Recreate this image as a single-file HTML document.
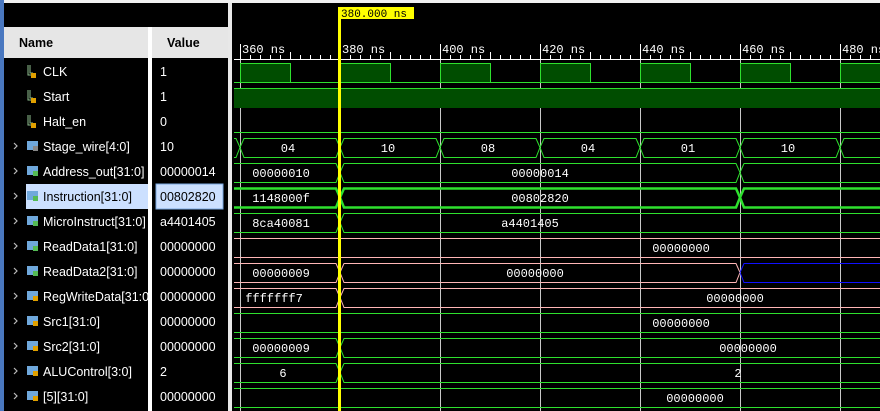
<!DOCTYPE html>
<html><head><style>
body{margin:0;width:880px;height:411px;overflow:hidden;background:#000}
svg{display:block}
.n{font-family:"Liberation Sans",Arial,sans-serif;font-size:12.5px;fill:#fff}
.h{font-family:"Liberation Sans",Arial,sans-serif;font-size:12.5px;font-weight:bold;fill:#000}
.w{font-family:"Liberation Mono",monospace;font-size:12px;fill:#fff}
.r{font-family:"Liberation Mono",monospace;font-size:12px;fill:#fff}
</style></head><body>
<svg width="880" height="411" viewBox="0 0 880 411" xmlns="http://www.w3.org/2000/svg">
<rect x="0" y="0" width="880" height="411" fill="#000"/>
<rect x="0" y="0" width="880" height="3" fill="#f0f0f0"/>
<rect x="0" y="0" width="4" height="411" fill="#4a78c0"/>
<rect x="148" y="27" width="4" height="384" fill="#fff"/>
<rect x="228" y="3" width="4" height="408" fill="#e8e8e8"/>
<rect x="4" y="27" width="144" height="31" fill="#e6e6e6"/>
<rect x="152" y="27" width="76" height="31" fill="#e6e6e6"/>
<text class="h" x="19" y="47">Name</text>
<text class="h" x="167" y="47">Value</text>
<rect x="26" y="184" width="122" height="25" fill="#cce0ff"/>
<rect x="156" y="184" width="67" height="25" fill="#cce0ff" stroke="#7aa7e0"/>
<g class="n">
<text x="43" y="76">CLK</text><text x="160" y="76">1</text>
<text x="43" y="101">Start</text><text x="160" y="101">1</text>
<text x="43" y="126">Halt_en</text><text x="160" y="126">0</text>
<text x="43" y="151">Stage_wire[4:0]</text><text x="160" y="151">10</text>
<text x="43" y="176">Address_out[31:0]</text><text x="160" y="176">00000014</text>
<text x="43" y="201" style="fill:#000">Instruction[31:0]</text><text x="160" y="201" style="fill:#000">00802820</text>
<text x="43" y="226">MicroInstruct[31:0]</text><text x="160" y="226">a4401405</text>
<text x="43" y="251">ReadData1[31:0]</text><text x="160" y="251">00000000</text>
<text x="43" y="276">ReadData2[31:0]</text><text x="160" y="276">00000000</text>
<text x="43" y="301">RegWriteData[31:0]</text><text x="160" y="301">00000000</text>
<text x="43" y="326">Src1[31:0]</text><text x="160" y="326">00000000</text>
<text x="43" y="351">Src2[31:0]</text><text x="160" y="351">00000000</text>
<text x="43" y="376">ALUControl[3:0]</text><text x="160" y="376">2</text>
<text x="43" y="401">[5][31:0]</text><text x="160" y="401">00000000</text>
</g>
<g stroke="#bbb" stroke-width="1.2" fill="none">
<path d="M14 143l3 3-3 3M14 168l3 3-3 3M14 193l3 3-3 3M14 218l3 3-3 3M14 243l3 3-3 3M14 268l3 3-3 3M14 293l3 3-3 3M14 318l3 3-3 3M14 343l3 3-3 3M14 368l3 3-3 3M14 393l3 3-3 3"/>
</g>
<g>
<path d="M28 65v10h3M30 65v8h3" stroke="#8fbf8f" stroke-width="1" fill="none"/><rect x="31" y="73" width="5" height="5" fill="#e0a000"/>
<path d="M28 90v10h3M30 90v8h3" stroke="#8fbf8f" stroke-width="1" fill="none"/><rect x="31" y="98" width="5" height="5" fill="#e0a000"/>
<path d="M28 115v10h3M30 115v8h3" stroke="#8fbf8f" stroke-width="1" fill="none"/><rect x="31" y="123" width="5" height="5" fill="#e0a000"/>
</g>
<g fill="#6fa8dc">
<rect x="27" y="141" width="11" height="9"/><rect x="27" y="166" width="11" height="9"/><rect x="27" y="191" width="11" height="9"/>
<rect x="27" y="216" width="11" height="9"/><rect x="27" y="241" width="11" height="9"/><rect x="27" y="266" width="11" height="9"/>
<rect x="27" y="291" width="11" height="9"/><rect x="27" y="316" width="11" height="9"/><rect x="27" y="341" width="11" height="9"/>
<rect x="27" y="366" width="11" height="9"/><rect x="27" y="391" width="11" height="9"/>
</g>
<g>
<rect x="33" y="146" width="5" height="5" fill="#888"/><rect x="33" y="171" width="5" height="5" fill="#5b5"/><rect x="33" y="196" width="5" height="5" fill="#5b5"/>
<rect x="33" y="221" width="5" height="5" fill="#5b5"/><rect x="33" y="246" width="5" height="5" fill="#5b5"/><rect x="33" y="271" width="5" height="5" fill="#5b5"/>
<rect x="33" y="296" width="5" height="5" fill="#e0a000"/><rect x="33" y="321" width="5" height="5" fill="#e0a000"/><rect x="33" y="346" width="5" height="5" fill="#e0a000"/>
<rect x="33" y="371" width="5" height="5" fill="#e0a000"/><rect x="33" y="396" width="5" height="5" fill="#e0a000"/>
</g>

<g stroke="#c8c8c8" stroke-width="1">
<path d="M240.5 45V411M440.5 45V411M540.5 60V411M640.5 60V411M740.5 45V411M840.5 45V411"/>
</g>
<path d="M234 59.5H880" stroke="#fff"/>
<g stroke="#fff">
<path d="M240.5 44V59M340.5 44V59M440.5 44V59M540.5 44V59M640.5 44V59M740.5 44V59M840.5 44V59"/>
<path d="M290.5 52V59M390.5 52V59M490.5 52V59M590.5 52V59M690.5 52V59M790.5 52V59"/>
<path d="M250.5 55V59M260.5 55V59M270.5 55V59M280.5 55V59M300.5 55V59M310.5 55V59M320.5 55V59M330.5 55V59M350.5 55V59M360.5 55V59M370.5 55V59M380.5 55V59M400.5 55V59M410.5 55V59M420.5 55V59M430.5 55V59M450.5 55V59M460.5 55V59M470.5 55V59M480.5 55V59M500.5 55V59M510.5 55V59M520.5 55V59M530.5 55V59M550.5 55V59M560.5 55V59M570.5 55V59M580.5 55V59M600.5 55V59M610.5 55V59M620.5 55V59M630.5 55V59M650.5 55V59M660.5 55V59M670.5 55V59M680.5 55V59M700.5 55V59M710.5 55V59M720.5 55V59M730.5 55V59M750.5 55V59M760.5 55V59M770.5 55V59M780.5 55V59M800.5 55V59M810.5 55V59M820.5 55V59M830.5 55V59M850.5 55V59M860.5 55V59M870.5 55V59"/>
</g>
<g class="r">
<text x="242" y="53">360 ns</text><text x="342" y="53">380 ns</text><text x="442" y="53">400 ns</text><text x="542" y="53">420 ns</text><text x="642" y="53">440 ns</text><text x="742" y="53">460 ns</text><text x="842" y="53">480 ns</text>
</g>
<g fill="#004d00" stroke="#2ee02e" stroke-width="1">
<rect x="240.5" y="63.5" width="50" height="19"/><rect x="340.5" y="63.5" width="50" height="19"/><rect x="440.5" y="63.5" width="50" height="19"/><rect x="540.5" y="63.5" width="50" height="19"/><rect x="640.5" y="63.5" width="50" height="19"/><rect x="740.5" y="63.5" width="50" height="19"/><rect x="840.5" y="63.5" width="50" height="19"/>
</g>
<path d="M234 82.5H880" stroke="#2ee02e"/>
<rect x="234" y="88" width="646" height="20" fill="#004d00"/>
<path d="M234 88.5H880" stroke="#2ee02e"/>
<path d="M234 132.5H880" stroke="#2ee02e"/>
<g fill="none" stroke="#2ee02e" stroke-width="1">
<path d="M234 138.5H236L240 147.5L244 138.5H336L340 147.5L344 138.5H436L440 147.5L444 138.5H536L540 147.5L544 138.5H636L640 147.5L644 138.5H736L740 147.5L744 138.5H836L840 147.5L844 138.5H880"/>
<path d="M234 157.5H236L240 147.5L244 157.5H336L340 147.5L344 157.5H436L440 147.5L444 157.5H536L540 147.5L544 157.5H636L640 147.5L644 157.5H736L740 147.5L744 157.5H836L840 147.5L844 157.5H880"/>
<path d="M234 163.5H336L340 172.5L344 163.5H736L740 172.5L744 163.5H880"/>
<path d="M234 182.5H336L340 172.5L344 182.5H736L740 172.5L744 182.5H880"/>
<path d="M234 188.5H336L340 197.5L344 188.5H736L740 197.5L744 188.5H880" stroke-width="2.5"/>
<path d="M234 207.5H336L340 197.5L344 207.5H736L740 197.5L744 207.5H880" stroke-width="2.5"/>
<path d="M234 213.5H336L340 222.5L344 213.5H880"/>
<path d="M234 232.5H336L340 222.5L344 232.5H880"/>
<path d="M234 313.5H880M234 332.5H880"/>
<path d="M234 338.5H336L340 347.5L344 338.5H880"/>
<path d="M234 357.5H336L340 347.5L344 357.5H880"/>
<path d="M234 363.5H336L340 372.5L344 363.5H880"/>
<path d="M234 382.5H336L340 372.5L344 382.5H880"/>
<path d="M234 388.5H880M234 407.5H880"/>
</g>
<g fill="none" stroke="#ffb6b6" stroke-width="1">
<path d="M234 238.5H880M234 257.5H880"/>
<path d="M234 263.5H336L340 272.5L344 263.5H736L740 272.5"/>
<path d="M234 282.5H336L340 272.5L344 282.5H736L740 272.5"/>
<path d="M234 288.5H336L340 297.5L344 288.5H880"/>
<path d="M234 307.5H336L340 297.5L344 307.5H880"/>
</g>
<path d="M740 272.5L744 263.5H880M740 272.5L744 282.5H880" fill="none" stroke="#1010ff" stroke-width="1"/>
<g class="w" text-anchor="middle">
<text x="288" y="152">04</text><text x="388" y="152">10</text><text x="488" y="152">08</text><text x="588" y="152">04</text><text x="688" y="152">01</text><text x="788" y="152">10</text>
<text x="281" y="177">00000010</text><text x="540" y="177">00000014</text>
<text x="281" y="202">1148000f</text><text x="540" y="202">00802820</text>
<text x="281" y="227">8ca40081</text><text x="530" y="227">a4401405</text>
<text x="681" y="252">00000000</text>
<text x="281" y="277">00000009</text><text x="535" y="277">00000000</text>
<text x="274" y="302">fffffff7</text><text x="735" y="302">00000000</text>
<text x="681" y="327">00000000</text>
<text x="281" y="352">00000009</text><text x="748" y="352">00000000</text>
<text x="283" y="377">6</text><text x="738" y="377">2</text>
<text x="695" y="402">00000000</text>
</g>
<rect x="338" y="7" width="3" height="404" fill="#ffff00"/>
<rect x="339" y="7" width="75" height="12" fill="#ffff00"/>
<text class="r" x="341" y="17" style="fill:#000;font-size:11px">380.000 ns</text>
</svg>
</body></html>
